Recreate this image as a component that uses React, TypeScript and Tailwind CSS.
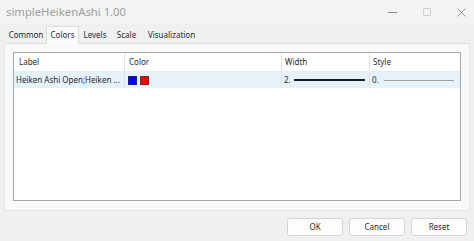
import React from "react";

const font = { fontFamily: "'Noto Sans', 'DejaVu Sans', sans-serif" };

const tabs = [
  { name: "Common", w: "w-[40px]" },
  { name: "Colors", w: "w-[33px]" },
  { name: "Levels", w: "w-[32px]" },
  { name: "Scale", w: "w-[31px]" },
  { name: "Visualization", w: "w-[59px]" },
];

export default function App() {
  return (
    <div
      className="w-[474px] h-[241px] bg-[#f0f0f0] flex flex-col overflow-hidden text-[8px] text-[#2a2a2a]"
      style={font}
    >
      {/* title bar */}
      <div className="h-[24px] bg-[#f3f3f3] flex items-center pl-[6px]">
        <span className="text-[#a0a0a0] text-[11.3px]">simpleHeikenAshi 1.00</span>
        <div className="ml-auto flex items-center h-full pr-[8px] gap-[26px]">
          <div className="w-[9px] h-px bg-[#8a8a8a]" />
          <div className="w-[8px] h-[8px] border border-[#cfcfcf] rounded-[1px]" />
          <svg width="9" height="9" viewBox="0 0 9 9">
            <path d="M0.5 0.5 L8.5 8.5 M8.5 0.5 L0.5 8.5" stroke="#8a8a8a" strokeWidth="0.9" />
          </svg>
        </div>
      </div>

      {/* tabs */}
      <div className="h-[20px] pl-[6px] pr-[4px] flex items-end">
        <div className="flex items-end w-full h-[16px] border-b border-[#dcdcdc]">
          {tabs.map((t) => (
            <div
              key={t.name}
              className={
                t.name === "Colors"
                  ? `${t.w} h-[18px] -mb-px bg-[#fbfbfb] border-x border-t border-[#dcdcdc] flex justify-center items-start pt-[2px]`
                  : `${t.w} h-[16px] flex justify-center items-center`
              }
            >
              {t.name}
            </div>
          ))}
        </div>
      </div>

      {/* panel */}
      <div className="mx-[4px] h-[167px] bg-[#f9f9f9] border-x border-b border-[#e6e6e6] px-[8px] pt-[8px] pb-[9px]">
        <div className="h-full bg-white border border-[#a8a8a8] flex flex-col">
          <div className="grid grid-cols-[111px_157px_88px_1fr] h-[19px] border-b border-[#ececec]">
            <div className="pl-[5px] flex items-center border-r border-[#e2e2e2]">Label</div>
            <div className="pl-[4px] flex items-center border-r border-[#e2e2e2]">Color</div>
            <div className="pl-[3px] flex items-center border-r border-[#e2e2e2]">Width</div>
            <div className="pl-[3px] flex items-center">Style</div>
          </div>
          <div className="grid grid-cols-[111px_157px_88px_1fr] h-[16px] bg-[#e5f1fb]">
            <div className="pl-[2px] flex items-center border-r border-[#e2e2e2] whitespace-nowrap overflow-hidden">
              Heiken Ashi Open;Heiken ...
            </div>
            <div className="pl-[3px] flex items-center gap-[3px] border-r border-[#e2e2e2]">
              <div className="w-[9px] h-[9px] bg-[#0000ff] border border-[#20207a]" />
              <div className="w-[9px] h-[9px] bg-[#ff0000] border border-[#8a2020]" />
            </div>
            <div className="pl-[2px] flex items-center gap-[3px] border-r border-[#e2e2e2] pr-[4px]">
              <span>2.</span>
              <div className="flex-1 h-[2px] bg-[#1b1b2b]" />
            </div>
            <div className="pl-[2px] flex items-center gap-[5px] pr-[6px]">
              <span>0.</span>
              <div className="flex-1 h-px bg-[#a0a0a0]" />
            </div>
          </div>
        </div>
      </div>

      {/* buttons */}
      <div className="flex-1 flex items-center justify-end gap-[6px] pr-[7px] pt-[1px]">
        {["OK", "Cancel", "Reset"].map((b) => (
          <div
            key={b}
            className="w-[56px] h-[18px] bg-[#fdfdfd] border border-[#d4d4d4] rounded-[3px] flex items-center justify-center"
          >
            {b}
          </div>
        ))}
      </div>
    </div>
  );
}
